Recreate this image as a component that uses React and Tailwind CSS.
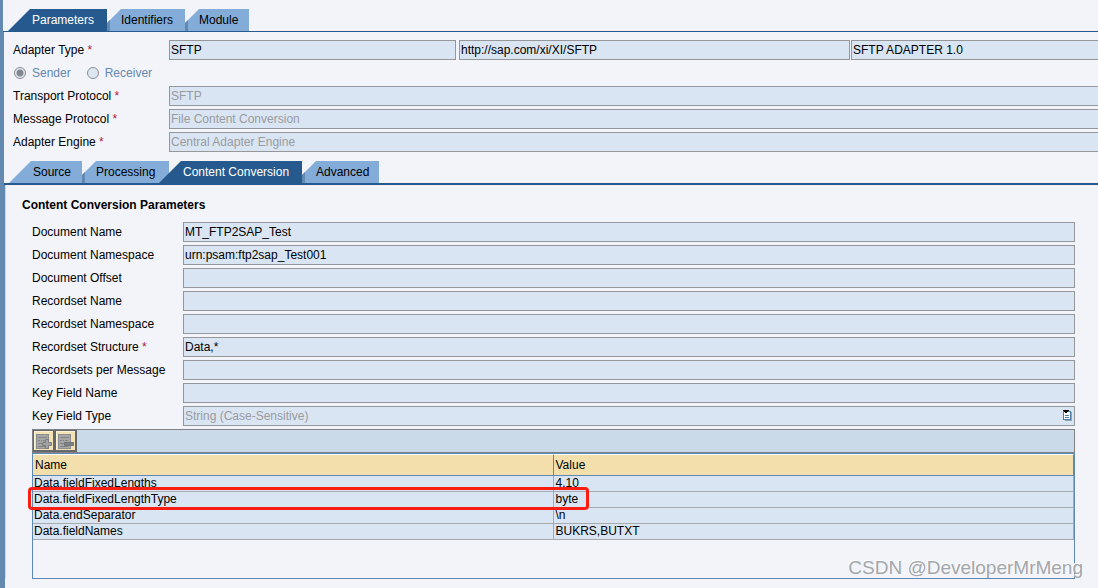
import React, { useState } from "react";

const mainTabs = [
  { name: "Parameters", width: "w-[99px]" },
  { name: "Identifiers", width: "w-[78px]" },
  { name: "Module", width: "w-16" },
];

const subTabs = [
  { name: "Source", width: "w-[73px]" },
  { name: "Processing", width: "w-[87px]" },
  { name: "Content Conversion", width: "w-[143px]" },
  { name: "Advanced", width: "w-[77px]" },
];

const adapterFields = [
  { id: "transport", label: "Transport Protocol", value: "SFTP" },
  { id: "message", label: "Message Protocol", value: "File Content Conversion" },
  { id: "engine", label: "Adapter Engine", value: "Central Adapter Engine" },
];

const conversionFields = [
  { id: "docName", label: "Document Name", value: "MT_FTP2SAP_Test" },
  { id: "docNamespace", label: "Document Namespace", value: "urn:psam:ftp2sap_Test001" },
  { id: "docOffset", label: "Document Offset", value: "" },
  { id: "rsName", label: "Recordset Name", value: "" },
  { id: "rsNamespace", label: "Recordset Namespace", value: "" },
  { id: "rsStructure", label: "Recordset Structure", value: "Data,*", required: true },
  { id: "rsPerMessage", label: "Recordsets per Message", value: "" },
  { id: "keyName", label: "Key Field Name", value: "" },
];

const parameters = [
  { name: "Data.fieldFixedLengths", value: "4,10" },
  { name: "Data.fieldFixedLengthType", value: "byte" },
  { name: "Data.endSeparator", value: "\\n" },
  { name: "Data.fieldNames", value: "BUKRS,BUTXT" },
];

const inputClass =
  "block w-full min-w-0 h-5 px-px pb-px border border-[#969799] bg-[#d9e5f3] text-black disabled:text-[#999b9f] disabled:opacity-100 outline-none";

const cellClass =
  "h-4 p-0 pl-px last:pl-0.5 border-b border-r border-[#a8abae] bg-[#d9e5f3] leading-[15px]";

const Tabs = ({ items, active, onSelect }) => (
  <div role="tablist" className="flex h-[22px]">
    {items.map(({ name, width }, index) => {
      let shape =
        "pl-[11px] border-l-[3px] border-[#6489b0] bg-[#84acd9] [clip-path:polygon(14px_0,100%_0,100%_100%,0_100%,0_14px)]";
      if (name === active) {
        shape =
          "pl-6 bg-[#265a8f] text-white [clip-path:polygon(22px_0,100%_0,100%_100%,0_100%)]";
        if (index > 0) shape += " -ml-2.5";
      } else if (index === 0) {
        shape = "pl-6 bg-[#84acd9] [clip-path:polygon(22px_0,100%_0,100%_100%,0_100%)]";
      }
      return (
        <button
          key={name}
          type="button"
          role="tab"
          aria-selected={name === active}
          onClick={() => onSelect(name)}
          className={`h-[22px] shrink-0 text-left whitespace-nowrap ${width} ${shape}`}
        >
          {name}
        </button>
      );
    })}
  </div>
);

const FieldLabel = ({ htmlFor, required, children }) => (
  <label htmlFor={htmlFor} className="whitespace-nowrap">
    {children}
    {required && <span className="text-[#b0203c]"> *</span>}
  </label>
);

const Radio = ({ id, label, checked }) => (
  <div className="flex items-center gap-1.5">
    <input
      id={id}
      type="radio"
      name="direction"
      defaultChecked={checked}
      disabled
      className="appearance-none size-3 rounded-full border border-[#8b8e92] bg-[#dde7f2] checked:bg-[radial-gradient(circle,#85888b_3px,#dde7f2_4px)]"
    />
    <label htmlFor={id} className="text-[#6489b0]">
      {label}
    </label>
  </div>
);

const RowIcon = ({ remove }) => (
  <svg width="18" height="18" viewBox="0 0 18 18" className="shrink-0" aria-hidden="true">
    <path d="M1 2h13v15H1z" fill="#8b8d8e" />
    <path d="M2 3h11v13H2z" fill="#a5a6a5" />
    <path
      d="M3 5.500h9M3 8.500h2M6 8.500h1M8 8.500h3M3 11.500h4M3 14.500h8"
      stroke="#818384"
    />
    {remove ? (
      <path d="M7.500 10.500h9v3h-9z" fill="#7f8283" stroke="#727577" />
    ) : (
      <path
        d="M10.500 7.500h3v3h3v3h-3v3h-3v-3h-3v-3h3z"
        fill="#a0a2a2"
        stroke="#7a7c7e"
      />
    )}
  </svg>
);

const ToolButton = ({ label, remove }) => (
  <button
    type="button"
    aria-label={label}
    className="flex items-center justify-center w-[22px] h-[22px] border-t border-r-2 border-b-2 border-l border-[#66676a] bg-[#f3e3b3] shadow-[inset_1px_1px_0_#fbf3d8]"
  >
    <RowIcon remove={remove} />
  </button>
);

const ParameterTable = () => (
  <div className="relative mt-[3px]">
    <div className="flex h-6 border border-[#808284] bg-[#cadae9]">
      <ToolButton label="Insert line" />
      <ToolButton label="Delete line" remove />
    </div>
    <div className="min-h-[126px] border border-[#5d89b4]">
      <table className="w-full table-fixed border-separate border-spacing-0 text-left">
        <thead>
          <tr>
            {["Name", "Value"].map((title) => (
              <th
                key={title}
                className="h-[22px] p-0 pl-0.5 border-t border-t-white border-b border-b-[#5d89b4] border-r border-r-[#5d89b4] bg-[#f2dfac] font-normal leading-5"
              >
                {title}
              </th>
            ))}
          </tr>
        </thead>
        <tbody>
          {parameters.map((row) => (
            <tr key={row.name}>
              <td className={cellClass}>{row.name}</td>
              <td className={cellClass}>{row.value}</td>
            </tr>
          ))}
        </tbody>
      </table>
    </div>
    {/* marker around the fieldFixedLengthType row */}
    <div className="pointer-events-none absolute -left-1 top-[58px] h-[23px] w-[561px] rounded border-[3px] border-[#fb1d12]" />
  </div>
);

const App = () => {
  const [mainTab, setMainTab] = useState("Parameters");
  const [subTab, setSubTab] = useState("Content Conversion");

  return (
    <main className="relative flex min-h-screen flex-col overflow-hidden border-l-[3px] border-[#6489b0] bg-[#f2f4f9] pt-[9px] font-['Liberation_Sans',Arial,sans-serif] text-[12px] leading-4 text-black">
      <div className="pl-[5px] border-b border-[#265a8f]">
        <Tabs items={mainTabs} active={mainTab} onSelect={setMainTab} />
      </div>

      <section className="flex flex-1 flex-col border-l border-[#6489b0] pt-2">
        <div className="grid grid-cols-[156px_1fr] items-center gap-y-[3px] pl-[9px]">
          <FieldLabel htmlFor="adapterType" required>
            Adapter Type
          </FieldLabel>
          <div className="grid grid-cols-[289fr_391fr_247fr] gap-px">
            <div className="pr-0.5">
              <input id="adapterType" readOnly defaultValue="SFTP" className={inputClass} />
            </div>
            <input
              aria-label="Namespace"
              readOnly
              defaultValue="http://sap.com/xi/XI/SFTP"
              className={inputClass}
            />
            <input
              aria-label="Software component"
              readOnly
              defaultValue="SFTP ADAPTER 1.0"
              className={`${inputClass} border-r-0`}
            />
          </div>

          <div className="col-span-2 flex h-5 items-center gap-4 pl-px">
            <Radio id="sender" label="Sender" checked />
            <Radio id="receiver" label="Receiver" />
          </div>

          {adapterFields.map((field) => (
            <React.Fragment key={field.id}>
              <FieldLabel htmlFor={field.id} required>
                {field.label}
              </FieldLabel>
              <input
                id={field.id}
                disabled
                defaultValue={field.value}
                className={`${inputClass} border-r-0`}
              />
            </React.Fragment>
          ))}
        </div>

        <div className="mt-[9px] border-b-2 border-[#265a8f] pl-[5px]">
          <Tabs items={subTabs} active={subTab} onSelect={setSubTab} />
        </div>

        <div className="flex-1 border-l border-[#6489b0]">
          <div className="h-full border-l border-[#c9d9ea] pt-2.5 pr-[23px] pl-[26px]">
            <h2 className="-ml-2.5 mb-[7px] font-bold leading-5">
              Content Conversion Parameters
            </h2>
            <div className="grid grid-cols-[151px_1fr] items-center gap-y-[3px]">
              {conversionFields.map((field) => (
                <React.Fragment key={field.id}>
                  <FieldLabel htmlFor={field.id} required={field.required}>
                    {field.label}
                  </FieldLabel>
                  <input id={field.id} defaultValue={field.value} className={inputClass} />
                </React.Fragment>
              ))}
              <FieldLabel htmlFor="keyType">Key Field Type</FieldLabel>
              <div className="relative">
                <select id="keyType" disabled className={`${inputClass} appearance-none`}>
                  <option>String (Case-Sensitive)</option>
                </select>
                <svg
                  className="pointer-events-none absolute right-[3px] top-1"
                  width="9"
                  height="11"
                  viewBox="0 0 9 11"
                  shapeRendering="crispEdges"
                  aria-hidden="true"
                >
                  <path d="M2 2h7v9H2z" fill="#8da5bd" />
                  <path d="M.5 1.500h7v8h-7z" fill="#fff" stroke="#4c7aa6" />
                  <path d="M2 5.500h4M2 7.500h4" stroke="#4c7aa6" />
                  <path d="M0 0h6v1H5v1H4v1H2V2H1V1H0z" fill="#000" />
                </svg>
              </div>
            </div>
            <ParameterTable />
          </div>
        </div>
      </section>

      <div className="pointer-events-none absolute right-[15px] bottom-2 text-[19px] leading-6 text-[#a3a6aa] [text-shadow:-1px_-1px_0_#fff]">
        CSDN @DeveloperMrMeng
      </div>
    </main>
  );
};

export default App;
